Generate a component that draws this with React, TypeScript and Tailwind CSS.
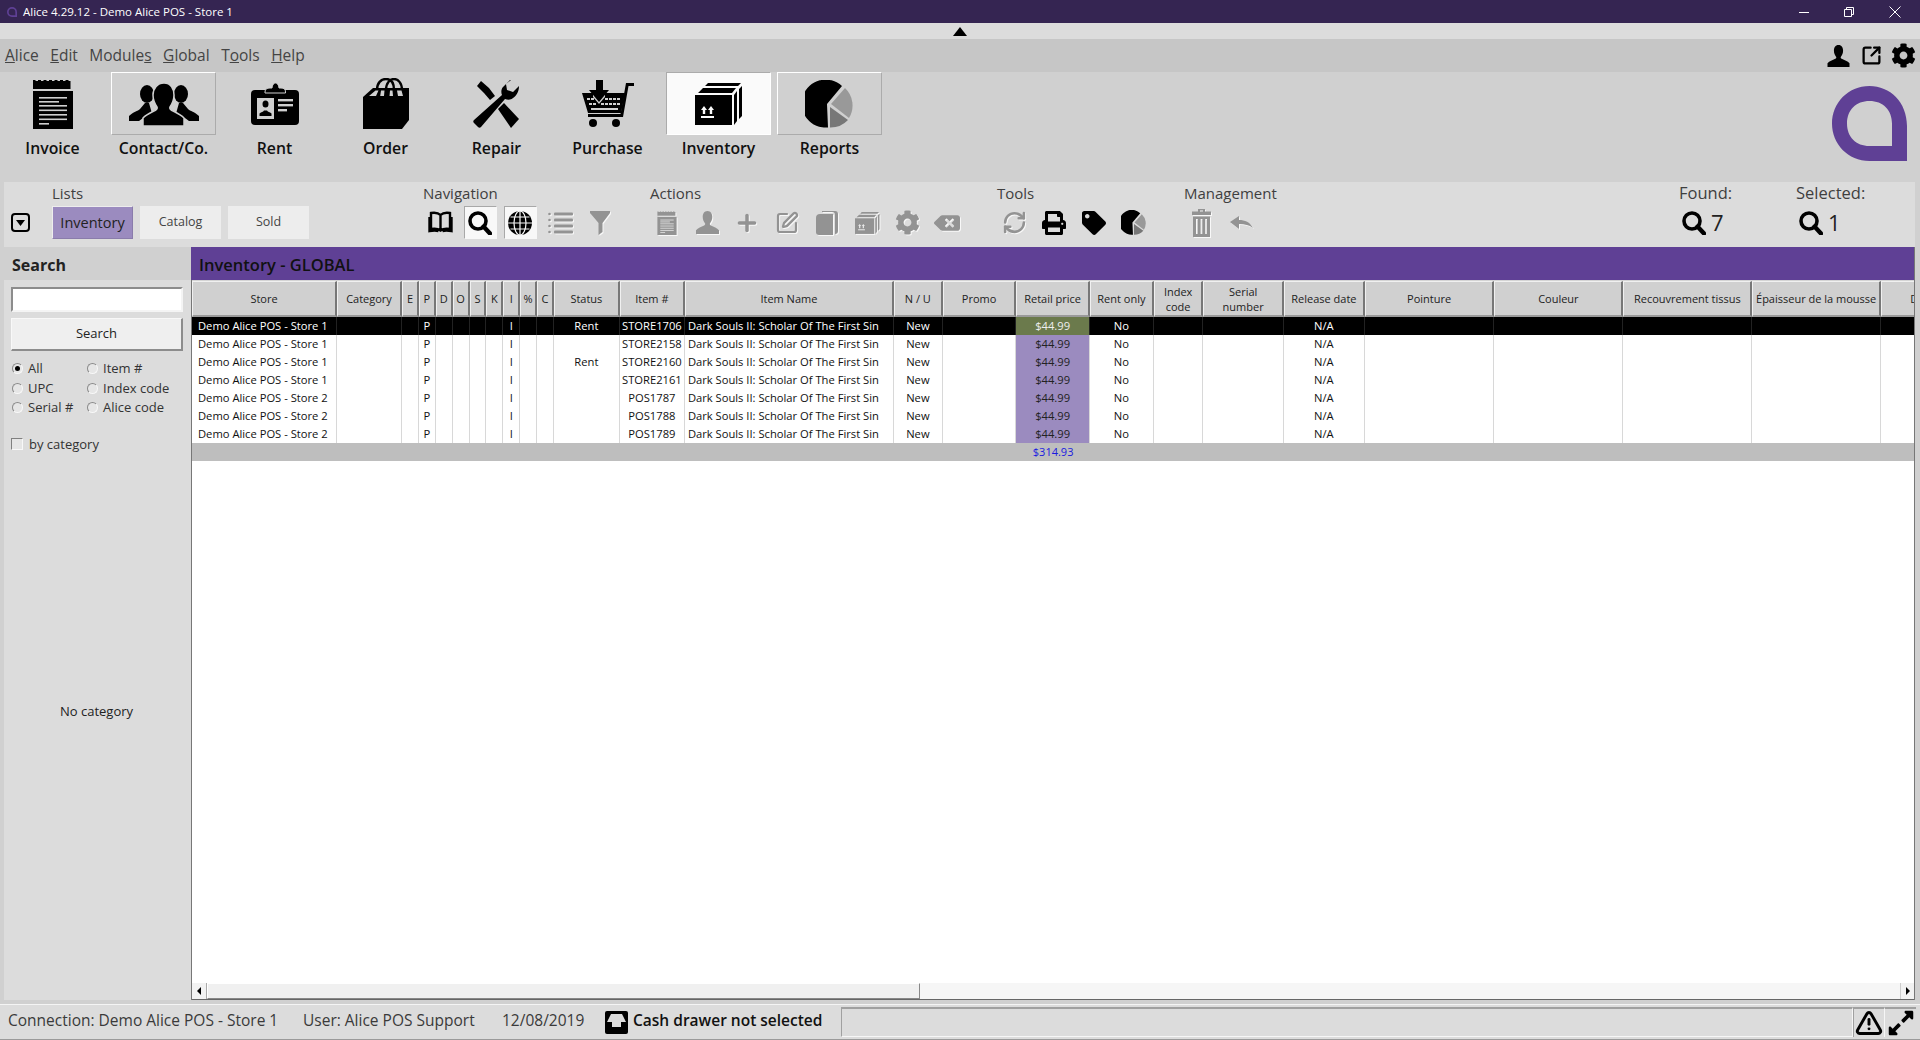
import React from 'react';
import { FaBackspace, FaCog, FaExpandAlt, FaPrint, FaTag } from 'react-icons/fa';
import { Plus, RefreshCw, SquareArrowOutUpRight, SquarePen, TriangleAlert } from 'lucide-react';

const PERSON = 'M12 0c3.5 0 5 3 5 6 0 3-1 5-2.5 7-.3.6 0 1.5 1 2 3 1.4 6.5 2.6 8.5 5v4H0v-4c2-2.4 5.5-3.6 8.5-5 1-.5 1.3-1.4 1-2C8 11 7 9 7 6c0-3 1.5-6 5-6z';

const GRAY = 'text-[#939393] drop-shadow-[1px_1px_0_#f8f8f8]';

// ---- icons ----
const PersonIcon = ({ className }: { className?: string }) => (
    <svg viewBox="0 0 24 24" className={className} fill="currentColor"><path d={PERSON} /></svg>
);

const SearchIcon = ({ className }: { className?: string }) => (
    <svg viewBox="0 0 24 24" className={className} fill="none" stroke="currentColor">
        <circle cx="10" cy="10" r="8" strokeWidth="3.6" />
        <path d="M15.5 15.5 22 22.5" strokeWidth="4.4" strokeLinecap="round" />
    </svg>
);

const NotepadIcon = ({ className, cut = '#d0d0d0' }: { className?: string; cut?: string }) => (
    <svg viewBox="0 0 40 50" className={className} fill="currentColor">
        <path d="M0 1h2.5v1H5V1h3v1h2.500V1h3v1h2.500V1h3v1h2.500V1h3v1h2.500V1h3v1h2.500V1h3v1h2V10H0z" />
        <rect x="0" y="12" width="40" height="38" />
        <g fill={cut}>
            <rect x="6" y="18" width="28" height="1.6" />
            <rect x="6" y="22" width="20" height="1.6" />
            <rect x="6" y="26" width="28" height="1.6" />
            <rect x="6" y="30.500" width="28" height="1.6" />
            <rect x="6" y="35" width="28" height="1.6" />
            <rect x="6" y="39.500" width="28" height="1.6" />
            <rect x="6" y="44" width="10" height="1.6" />
        </g>
    </svg>
);

const ContactIcon = ({ className }: { className?: string }) => (
    <svg viewBox="0 0 70 44" className={className} fill="currentColor">
        <ellipse cx="18" cy="12" rx="7" ry="9" />
        <path d="M0 34c4-4 9-5 11-7l5-6h4l4 14-10 1-4 3H0z" />
        <ellipse cx="52" cy="12" rx="7" ry="9" />
        <path d="M70 34c-4-4-9-5-11-7l-5-6h-4l-4 14 10 1 4 3h10z" />
        <path d="M35 1c7 0 10 6 10 12 0 5-2 9-4 12-.6 1.500 0 2.500 1.500 3.300 5 2.500 9 4 12.500 7.700v8H14v-8c3.500-3.700 7.500-5.200 12.500-7.700 1.500-.8 2.100-1.800 1.500-3.300-2-3-4-7-4-12C24 7 28 1 35 1z" stroke="#d0d0d0" strokeWidth="1.500" />
    </svg>
);

const BadgeIcon = ({ className }: { className?: string }) => (
    <svg viewBox="0 0 48 42" className={className} fill="currentColor">
        <rect x="0" y="7" width="48" height="35" rx="4" />
        <path d="M14 9c0-3 2-4 5-4h2c0-3 2-5 3.500-5S28 2 28 5h2c3 0 4.500 1 4.500 4v1H14z" stroke="#d0d0d0" strokeWidth="1" />
        <rect x="6" y="15" width="17" height="21" fill="#d0d0d0" />
        <ellipse cx="14.500" cy="21" rx="3" ry="3.600" />
        <path d="M8.500 33v-2.500c2-1.500 3.500-1.500 4.500-3h3c1 1.500 2.500 1.500 4.500 3V33z" />
        <g fill="#d0d0d0">
            <rect x="27" y="16" width="15" height="2.400" />
            <rect x="27" y="21" width="15" height="2.400" />
            <rect x="27" y="26" width="9" height="2.400" />
        </g>
    </svg>
);

const BagIcon = ({ className }: { className?: string }) => (
    <svg viewBox="0 0 46 51" className={className}>
        <path d="M0 19 10 10h36v32l-7 9H0z" fill="currentColor" />
        <path d="M14 12c0-7 4-11 9-11s8 4 8 11M23 12c0-7 4-11 8-11s8 4 8 11" fill="none" stroke="currentColor" strokeWidth="2.400" />
        <path d="M6 18 12.500 12.500h3L13 18zM18 12.500h3.500L21 18h-3.800zM27 12.500h2.500l.5 5.500h-3.500zM34 12.500h4.500L40 18h-5z" fill="#d0d0d0" />
    </svg>
);

const RepairIcon = ({ className }: { className?: string }) => (
    <svg viewBox="0 0 47 48" className={className} fill="currentColor">
        <path d="M37 0l-7 7c-2 2-2 6-1 8L1 40c-1 1-1 2 0 3l4 4c1 1 2 1 3 0l24-28c3 1 6 1 8-1 3-2 6-6 6-12l-6 6-6-2-1-6 5-4z" />
        <path d="M4 6 8 1l8 7 6 8-5 4-6-7z" />
        <path d="M25 29 31 23l15 16-8 9z" />
    </svg>
);

const CartIcon = ({ className }: { className?: string }) => (
    <svg viewBox="0 0 52 48" className={className} fill="currentColor">
        <path d="M44 3h8v3h-5.500L41 37H6v-3h32.500z" />
        <path d="M0 13h11v4l6 7 6-7v-4h20l-4 20H6z" />
        <g fill="#d0d0d0">
            <rect x="5" y="18" width="3" height="2" /><rect x="9" y="18" width="3" height="2" />
            <rect x="23" y="18" width="3" height="2" /><rect x="27" y="18" width="3" height="2" /><rect x="31" y="18" width="3" height="2" /><rect x="35" y="18" width="3" height="2" />
            <rect x="7" y="23" width="3" height="2" /><rect x="11" y="23" width="3" height="2" /><rect x="19" y="23" width="3" height="2" /><rect x="23" y="23" width="3" height="2" /><rect x="27" y="23" width="3" height="2" /><rect x="31" y="23" width="3" height="2" /><rect x="35" y="23" width="3" height="2" />
            <rect x="9" y="28" width="27" height="2" />
        </g>
        <path d="M14 0h7v10h6l-10 12L7 10h7z" />
        <circle cx="11" cy="43" r="4" /><circle cx="34" cy="43" r="4" />
    </svg>
);

const BoxIcon = ({ className, cut = '#fafafa' }: { className?: string; cut?: string }) => (
    <svg viewBox="0 0 48 42" className={className} fill="currentColor">
        <rect x="0" y="12" width="37" height="30" />
        <path d="M3 10l5-5h33l-4 5zM10 3l3-3h33l-3 3z" />
        <path d="M39 12l3-4v30l-3 4zM44 6l3-3v30l-3 3z" />
        <g fill={cut}>
            <path d="M6 27l3-4 3 4h-1.800v4h-2.400v-4zM13 27l3-4 3 4h-1.800v4h-2.400v-4z" />
            <rect x="6" y="33" width="13" height="2" />
        </g>
    </svg>
);

const PieIcon = ({ className }: { className?: string }) => (
    <svg viewBox="0 0 50 48" className={className}>
        <path d="M22 24 37 6A24 24 0 1 0 23 47.500z" fill="#000" />
        <path d="M26 24 40 8A24 24 0 0 1 44 38z" fill="#999" />
        <path d="M25 27 43 40A24 24 0 0 1 25 47.500z" fill="#777" />
    </svg>
);

const GlobeIcon = ({ className }: { className?: string }) => (
    <svg viewBox="0 0 24 24" className={className}>
        <circle cx="12" cy="12" r="12" fill="#000" />
        <g fill="none" stroke="#f8f8f8" strokeWidth="1.200">
            <path d="M0 12h24M2.500 6h19M2.500 18h19M12 0v24" />
            <ellipse cx="12" cy="12" rx="6" ry="12" />
        </g>
    </svg>
);

const ListIcon = ({ className }: { className?: string }) => (
    <svg viewBox="0 0 25 22" className={className} fill="currentColor">
        <circle cx="1.500" cy="2" r="1.300" /><circle cx="1.500" cy="8" r="1.300" /><circle cx="1.500" cy="14" r="1.300" /><circle cx="1.500" cy="20" r="1.300" />
        <rect x="6" y="0.500" width="19" height="3" rx="1" /><rect x="6" y="6.500" width="19" height="3" rx="1" /><rect x="6" y="12.500" width="19" height="3" rx="1" /><rect x="6" y="18.500" width="19" height="3" rx="1" />
    </svg>
);

const FunnelIcon = ({ className }: { className?: string }) => (
    <svg viewBox="0 0 20 24" className={className} fill="currentColor">
        <path d="M0 0h20v2l-7.500 10v9l-4 3V12L0 2z" />
    </svg>
);

const CopyIcon = ({ className }: { className?: string }) => (
    <svg viewBox="0 0 22 24" className={className} fill="currentColor">
        <path d="M4 3h13v21H3a3 3 0 0 1-3-3V7a4 4 0 0 1 4-4z" />
        <path d="M6 0h13a3 3 0 0 1 3 3v17a3 3 0 0 1-3 3v-19a3 3 0 0 0-3-3H6z" />
    </svg>
);

const TrashIcon = ({ className }: { className?: string }) => (
    <svg viewBox="0 0 21 28" className={className} fill="currentColor">
        <path fillRule="evenodd" d="M7 0h7v2.500h6V6H1V2.500h6zM9 1.500v1h3v-1zM2 7.500h17V28H2zM5 10v15h1.800V10zM9.600 10v15h1.800V10zM14.200 10v15H16V10z" />
    </svg>
);

const UndoIcon = ({ className }: { className?: string }) => (
    <svg viewBox="0 0 23 14" className={className} fill="currentColor">
        <path d="M9 0v4c6 0 11 2 14 8-4-3-8-4-14-4v5L0 6z" />
    </svg>
);

const LogoIcon = ({ className }: { className?: string }) => (
    <svg viewBox="0 0 75 75" className={className} fill="#5f4095">
        <path fillRule="evenodd" d="M37.500 0C58 0 75 16 75 40v35H37.500C16 75 0 58 0 37.500S16 0 37.500 0zM37.500 15C24 15 15 24 15 37.500S24 60 37.500 60H60V37.500C60 24 51 15 37.500 15z" />
    </svg>
);

const DrawerIcon = ({ className }: { className?: string }) => (
    <svg viewBox="0 0 23 23" className={className}>
        <path d="M2 0h19a2 2 0 0 1 2 2v19a2 2 0 0 1-2 2H2a2 2 0 0 1-2-2V2a2 2 0 0 1 2-2z" fill="#000" />
        <path d="M6 3h11l4 8h-5v5H7v-5H2z" fill="#dcdcdc" />
    </svg>
);

const DropdownIcon = () => (
    <svg viewBox="0 0 19 19" className="w-[19px] h-[19px]">
        <rect x="1" y="1" width="17" height="17" rx="3" fill="none" stroke="#000" strokeWidth="2" />
        <path d="M5 7h9l-4.500 6z" fill="#000" />
    </svg>
);

// ---- data ----
const MODULES = [
    { label: 'Invoice', icon: <NotepadIcon className="w-[40px] h-[50px]" /> },
    { label: 'Contact/Co.', icon: <ContactIcon className="w-[70px] h-[44px]" />, box: 'raised' },
    { label: 'Rent', icon: <BadgeIcon className="w-[48px] h-[42px]" /> },
    { label: 'Order', icon: <BagIcon className="w-[46px] h-[51px]" /> },
    { label: 'Repair', icon: <RepairIcon className="w-[47px] h-[48px]" /> },
    { label: 'Purchase', icon: <CartIcon className="w-[52px] h-[48px]" /> },
    { label: 'Inventory', icon: <BoxIcon className="w-[48px] h-[42px]" />, box: 'pressed' },
    { label: 'Reports', icon: <PieIcon className="w-[50px] h-[48px]" />, box: 'raised' },
];

const HEADERS = ['Store', 'Category', 'E', 'P', 'D', 'O', 'S', 'K', 'I', '%', 'C', 'Status', 'Item #', 'Item Name', 'N / U', 'Promo', 'Retail price', 'Rent only', 'Index\ncode', 'Serial\nnumber', 'Release date', 'Pointure', 'Couleur', 'Recouvrement tissus', 'Épaisseur de la mousse', 'Dimension'];

const ROWS = [
    { store: 'Demo Alice POS - Store 1', status: 'Rent', item: 'STORE1706' },
    { store: 'Demo Alice POS - Store 1', status: '', item: 'STORE2158' },
    { store: 'Demo Alice POS - Store 1', status: 'Rent', item: 'STORE2160' },
    { store: 'Demo Alice POS - Store 1', status: '', item: 'STORE2161' },
    { store: 'Demo Alice POS - Store 2', status: '', item: 'POS1787' },
    { store: 'Demo Alice POS - Store 2', status: '', item: 'POS1788' },
    { store: 'Demo Alice POS - Store 2', status: '', item: 'POS1789' },
];

const GRID = 'grid grid-cols-[145px_65px_repeat(9,16.89px)_66px_65px_209px_49px_73.5px_73.5px_64px_49.5px_80.5px_81px_129.5px_129px_129px_128.5px_115px]';

const SEARCH_OPTIONS = ['All', 'Item #', 'UPC', 'Index code', 'Serial #', 'Alice code'];

// ---- pieces ----
const Group: React.FC<{ label: string; className: string; labelClass?: string; children: React.ReactNode }> = ({ label, className, labelClass, children }) => (
    <div className={className}>
        <div className={`h-[24px] leading-[22px] text-[#3f3f3f] ${labelClass || 'text-[15px]'}`}>{label}</div>
        <div className="h-[33px] flex items-center">{children}</div>
    </div>
);

const Slot: React.FC<{ active?: boolean; children: React.ReactNode }> = ({ active, children }) => (
    <div className="w-[40px] h-[33px] flex items-center justify-center shrink-0">
        {active ? (
            <div className="w-[33px] h-[33px] flex items-center justify-center bg-[#f8f8f8] border border-[#f8f8f8] border-t-[#a8a8a8] border-l-[#a8a8a8]">{children}</div>
        ) : children}
    </div>
);

const Radio: React.FC<{ checked?: boolean }> = ({ checked }) => (
    <span className="w-[11px] h-[11px] rounded-full bg-[#e6e6e6] border border-[#f8f8f8] border-t-[#8a8a8a] border-l-[#8a8a8a] flex items-center justify-center shrink-0">
        {checked && <span className="w-[5px] h-[5px] rounded-full bg-black" />}
    </span>
);

const App: React.FC = () => {
    return (
        <div className="w-[1920px] h-[1040px] overflow-hidden flex flex-col bg-[#d0d0d0] text-black font-['Open_Sans',sans-serif]">
            {/* title bar */}
            <div className="h-[23px] shrink-0 bg-[#352552] flex items-center text-white">
                <svg viewBox="0 0 12 12" className="w-[10px] h-[10px] ml-[7px] mr-[6px]" fill="none" stroke="#5f4095" strokeWidth="2"><path d="M6 1a5 5 0 1 0 0 10h5V6a5 5 0 0 0-5-5z" /></svg>
                <span className="text-[11.5px]">Alice 4.29.12 - Demo Alice POS - Store 1</span>
                <div className="ml-auto flex items-center mr-[19px] gap-[35px]">
                    <svg viewBox="0 0 10 10" className="w-[10px] h-[10px]" stroke="#fff"><path d="M0 5.500h10" /></svg>
                    <svg viewBox="0 0 10 10" className="w-[10px] h-[10px]" fill="none" stroke="#fff"><path d="M.5 2.500h7v7h-7zM2.500 2.500v-2h7v7h-2" /></svg>
                    <svg viewBox="0 0 12 12" className="w-[12px] h-[12px]" stroke="#fff"><path d="M.5.5l11 11M11.500.5l-11 11" /></svg>
                </div>
            </div>

            {/* collapse strip */}
            <div className="h-[16px] shrink-0 bg-[#dcdcdc] flex items-center justify-center">
                <div className="w-0 h-0 border-x-[7px] border-x-transparent border-b-[9px] border-b-black" />
            </div>

            {/* menu */}
            <div className="h-[33px] shrink-0 bg-[#c6c6c6] flex items-center pl-[5px] pr-[4px]">
                <div className="flex gap-[11.5px] text-[15.5px] text-[#444]">
                    <span><u>A</u>lice</span>
                    <span><u>E</u>dit</span>
                    <span>Module<u>s</u></span>
                    <span><u>G</u>lobal</span>
                    <span>T<u>o</u>ols</span>
                    <span><u>H</u>elp</span>
                </div>
                <div className="ml-auto flex items-center">
                    <PersonIcon className="w-[23px] h-[22px] mr-[11px]" />
                    <SquareArrowOutUpRight className="w-[21px] h-[21px] mr-[9px]" strokeWidth={2.6} />
                    <FaCog className="w-[25px] h-[25px]" />
                </div>
            </div>

            {/* modules */}
            <div className="h-[110px] shrink-0 flex justify-between pr-[13px]">
                <div className="flex gap-[6px]">
                    {MODULES.map((m) => (
                        <div key={m.label} className="w-[105px] flex flex-col items-center">
                            <div className={`w-full h-[63px] flex items-center justify-center border ${m.box === 'raised' ? 'border-[#ababab] border-t-white border-l-white' : m.box === 'pressed' ? 'bg-[#fafafa] border-white border-t-[#ababab] border-l-[#ababab]' : 'border-transparent'}`}>
                                {m.icon}
                            </div>
                            <div className="mt-[1px] text-[15.800px] leading-[24px] font-semibold text-[#111]">{m.label}</div>
                        </div>
                    ))}
                </div>
                <LogoIcon className="w-[75px] h-[75px] mt-[14px]" />
            </div>

            {/* toolbar */}
            <div className="h-[65px] shrink-0 ml-[4px] mr-[5px] bg-[#dcdcdc] flex">
                <div className="w-[48px] pl-[7px] pt-[31px]"><DropdownIcon /></div>
                <Group label="Lists" className="w-[368px]">
                    <div className="flex gap-[7px]">
                        <div className="w-[81px] h-[33px] flex items-center justify-center bg-[#9b8bbf] text-[14.500px] text-[#222] border border-[#ededed] border-r-[#8a7cab] border-b-[#8a7cab]">Inventory</div>
                        <div className="w-[81px] h-[33px] flex items-center justify-center bg-[#ededed] text-[12.500px] text-[#444]">Catalog</div>
                        <div className="w-[81px] h-[33px] flex items-center justify-center bg-[#ededed] text-[12.500px] text-[#444]">Sold</div>
                    </div>
                </Group>
                <Group label="Navigation" className="w-[227px]" labelClass="text-[15px] pl-[3px]">
                    <Slot>
                        <svg viewBox="0 0 25 23" className="w-[25px] h-[23px]" fill="none" stroke="#000" strokeWidth="2.400"><path d="M12.500 4C10 1.500 6 1.500 3 2v16c3-.5 7-.5 9.500 1.500C15 17.500 19 17.500 22 18V2c-3-.5-7-.5-9.500 2zM12.500 4v15M1.500 6v14c3.500-.5 7-.5 9 0M23.500 6v14c-3.500-.5-7-.5-9 0" /></svg>
                    </Slot>
                    <Slot active><SearchIcon className="w-[24px] h-[24px] text-black" /></Slot>
                    <Slot active><GlobeIcon className="w-[24px] h-[24px]" /></Slot>
                    <Slot><ListIcon className={`w-[25px] h-[22px] ${GRAY}`} /></Slot>
                    <Slot><FunnelIcon className={`w-[20px] h-[24px] ${GRAY}`} /></Slot>
                </Group>
                <Group label="Actions" className="w-[347px]" labelClass="text-[15px] pl-[3px]">
                    <Slot><NotepadIcon className={`w-[20px] h-[24px] ${GRAY}`} cut="#e8e8e8" /></Slot>
                    <Slot><PersonIcon className={`w-[23px] h-[23px] ${GRAY}`} /></Slot>
                    <Slot><Plus className={`w-[26px] h-[26px] ${GRAY}`} strokeWidth={3.200} /></Slot>
                    <Slot><SquarePen className={`w-[24px] h-[24px] ${GRAY}`} strokeWidth={2.200} /></Slot>
                    <Slot><CopyIcon className={`w-[22px] h-[24px] ${GRAY}`} /></Slot>
                    <Slot><BoxIcon className={`w-[25px] h-[22px] ${GRAY}`} cut="#e8e8e8" /></Slot>
                    <Slot><FaCog className={`w-[25px] h-[25px] ${GRAY}`} /></Slot>
                    <Slot><FaBackspace className={`w-[26px] h-[26px] ${GRAY}`} /></Slot>
                </Group>
                <Group label="Tools" className="w-[187px]" labelClass="text-[15px] pl-[3px]">
                    <Slot><RefreshCw className={`w-[25px] h-[25px] ${GRAY}`} strokeWidth={2.400} /></Slot>
                    <Slot><FaPrint className="w-[24px] h-[24px] text-black" /></Slot>
                    <Slot><FaTag className="w-[24px] h-[24px] text-black" /></Slot>
                    <Slot><PieIcon className="w-[26px] h-[25px]" /></Slot>
                </Group>
                <Group label="Management" className="w-[498px]" labelClass="text-[15px] pl-[3px]">
                    <Slot><TrashIcon className={`w-[21px] h-[28px] ${GRAY}`} /></Slot>
                    <Slot><UndoIcon className={`w-[23px] h-[14px] ${GRAY}`} /></Slot>
                </Group>
                <Group label="Found:" className="w-[117px]" labelClass="text-[16.500px]">
                    <SearchIcon className="w-[24px] h-[24px] ml-[3px] text-black" />
                    <span className="ml-[5px] text-[22px] text-[#222]">7</span>
                </Group>
                <Group label="Selected:" className="flex-1" labelClass="text-[16.500px]">
                    <SearchIcon className="w-[24px] h-[24px] ml-[3px] text-black" />
                    <span className="ml-[5px] text-[22px] text-[#222]">1</span>
                </Group>
            </div>

            {/* main */}
            <div className="h-[753px] shrink-0 flex ml-[4px] mr-[5px]">
                <aside className="w-[187px] shrink-0 flex flex-col bg-[#dcdcdc]">
                    <div className="h-[33px] shrink-0 bg-[#d0d0d0] px-[8px] pt-[3px] flex items-center text-[16px] font-bold text-[#222]">Search</div>
                    <div className="flex-1 flex flex-col px-[7px] pt-[7px]">
                        <div className="w-[172px] h-[25px] bg-white border-2 border-[#f4f4f4] border-t-[#8c8c8c] border-l-[#8c8c8c]" />
                        <div className="w-[172px] h-[33px] mt-[6px] flex items-center justify-center bg-[#efefef] border border-[#f8f8f8] border-r-2 border-b-2 border-r-[#8c8c8c] border-b-[#8c8c8c] text-[13px] text-[#222]">Search</div>
                        <div className="grid grid-cols-[75px_1fr] mt-[8px] pl-[1px]">
                            {SEARCH_OPTIONS.map((o, i) => (
                                <label key={o} className="h-[19.5px] flex items-center gap-[5px] text-[13px] leading-[19px] text-[#333]">
                                    <Radio checked={i === 0} />{o}
                                </label>
                            ))}
                        </div>
                        <label className="mt-[17px] flex items-center gap-[6px] text-[13px] text-[#333]">
                            <span className="w-[12px] h-[12px] bg-[#e6e6e6] border border-[#f8f8f8] border-t-[#808080] border-l-[#808080]" />
                            by category
                        </label>
                        <div className="flex-1 flex items-center justify-center pb-[30px] pr-[2px] text-[13px] text-[#222]">No category</div>
                    </div>
                </aside>

                <main className="flex-1 min-w-0 flex flex-col border-r border-r-[#777]">
                    <div className="h-[33px] shrink-0 bg-[#5f4095] pl-[8px] pt-[3px] flex items-center text-[16.500px] font-semibold text-[#111]">Inventory - GLOBAL</div>
                    <div className="flex-1 min-h-0 flex flex-col bg-white border-l border-l-[#777] overflow-hidden">
                        <div className={`${GRID} h-[37px] shrink-0 bg-[#d4d4d4] pt-[1px] w-max`}>
                            {HEADERS.map((h) => (
                                <div key={h} className="flex items-center justify-center text-center text-[11px] leading-[15px] text-[#222] px-[1px] bg-[#d0d0d0] border-r-2 border-b-2 border-r-[#777] border-b-[#9a9a9a] border-t border-l border-t-[#f0f0f0] border-l-[#f0f0f0] whitespace-pre-line">{h}</div>
                            ))}
                        </div>
                        {ROWS.map((r, ri) => {
                            const selected = ri === 0;
                            const cells = [r.store, '', '', 'P', '', '', '', '', 'I', '', '', r.status, r.item, 'Dark Souls II: Scholar Of The First Sin', 'New', '', '$44.99', 'No', '', '', 'N/A', '', '', '', '', ''];
                            return (
                                <div key={r.item} className={`${GRID} h-[18px] shrink-0 w-max text-[11.200px] leading-[18px] ${selected ? 'bg-black text-white' : 'bg-white text-[#111]'}`}>
                                    {cells.map((c, ci) => (
                                        <div
                                            key={ci}
                                            className={`whitespace-nowrap overflow-hidden border-r ${ci === 0 ? 'text-left pl-[6px]' : ci === 13 ? 'text-left pl-[3px]' : 'text-center'} ${ci === 16 ? (selected ? 'bg-[#6b7a4c] text-[#eee]' : 'bg-[#9b8bbf] text-[#222]') : ''} ${selected ? 'border-r-[#222]' : 'border-r-[#d8d8d8]'}`}
                                        >
                                            {c}
                                        </div>
                                    ))}
                                </div>
                            );
                        })}
                        <div className={`${GRID} h-[18px] shrink-0 w-max bg-[#bebebe] text-[11px] leading-[18px] text-[#1a1ae0]`}>
                            <div className="col-start-17 text-center">$314.93</div>
                        </div>
                        <div className="flex-1" />
                        {/* horizontal scrollbar */}
                        <div className="h-[17px] shrink-0 flex bg-[#ededed] border-b border-b-[#666]">
                            <div className="w-[15px] flex items-center justify-center bg-[#f2f2f2] border-r border-r-[#aaa]">
                                <div className="w-0 h-0 border-y-[4px] border-y-transparent border-r-[4px] border-r-black" />
                            </div>
                            <div className="w-[713px] bg-[#f0f0f0] border border-t-[#fff] border-l-[#fff] border-r-[#888] border-b-[#888]" />
                            <div className="flex-1 bg-[#f6f6f6]" />
                            <div className="w-[14px] flex items-center justify-center bg-[#f2f2f2] border-l border-l-[#ccc]">
                                <div className="w-0 h-0 border-y-[4px] border-y-transparent border-l-[4px] border-l-black" />
                            </div>
                        </div>
                    </div>
                </main>
            </div>

            {/* status bar */}
            <div className="h-[5px] shrink-0 border-b border-b-[#f4f4f4]" />
            <div className="h-[35px] shrink-0 bg-[#dcdcdc] border-b border-b-[#9a9a9a] flex items-center pl-[8px] text-[15.500px] text-[#3a3a3a]">
                <span className="w-[295px] shrink-0 mb-[3px]">Connection: Demo Alice POS - Store 1</span>
                <span className="w-[199px] shrink-0 mb-[3px]">User: Alice POS Support</span>
                <span className="w-[103px] shrink-0 mb-[3px]">12/08/2019</span>
                <DrawerIcon className="w-[23px] h-[23px] shrink-0" />
                <span className="ml-[5px] w-[208px] shrink-0 font-semibold text-[#111] mb-[3px]">Cash drawer not selected</span>
                <div className="w-[1012px] h-[30px] shrink-0 border border-[#f6f6f6] border-t-[#a0a0a0] border-l-[#a0a0a0] border-t-2" />
                <div className="w-[32px] h-[30px] shrink-0 flex items-center justify-center border-l border-r border-l-[#a0a0a0] border-r-[#f6f6f6] border-t-2 border-t-[#a0a0a0]">
                    <TriangleAlert className="w-[28px] h-[28px] text-black" strokeWidth={2.500} />
                </div>
                <div className="w-[31px] h-[30px] shrink-0 flex items-center justify-center border-t-2 border-t-[#a0a0a0]">
                    <FaExpandAlt className="w-[28px] h-[28px] text-black" />
                </div>
            </div>
        </div>
    );
};

export default App;
